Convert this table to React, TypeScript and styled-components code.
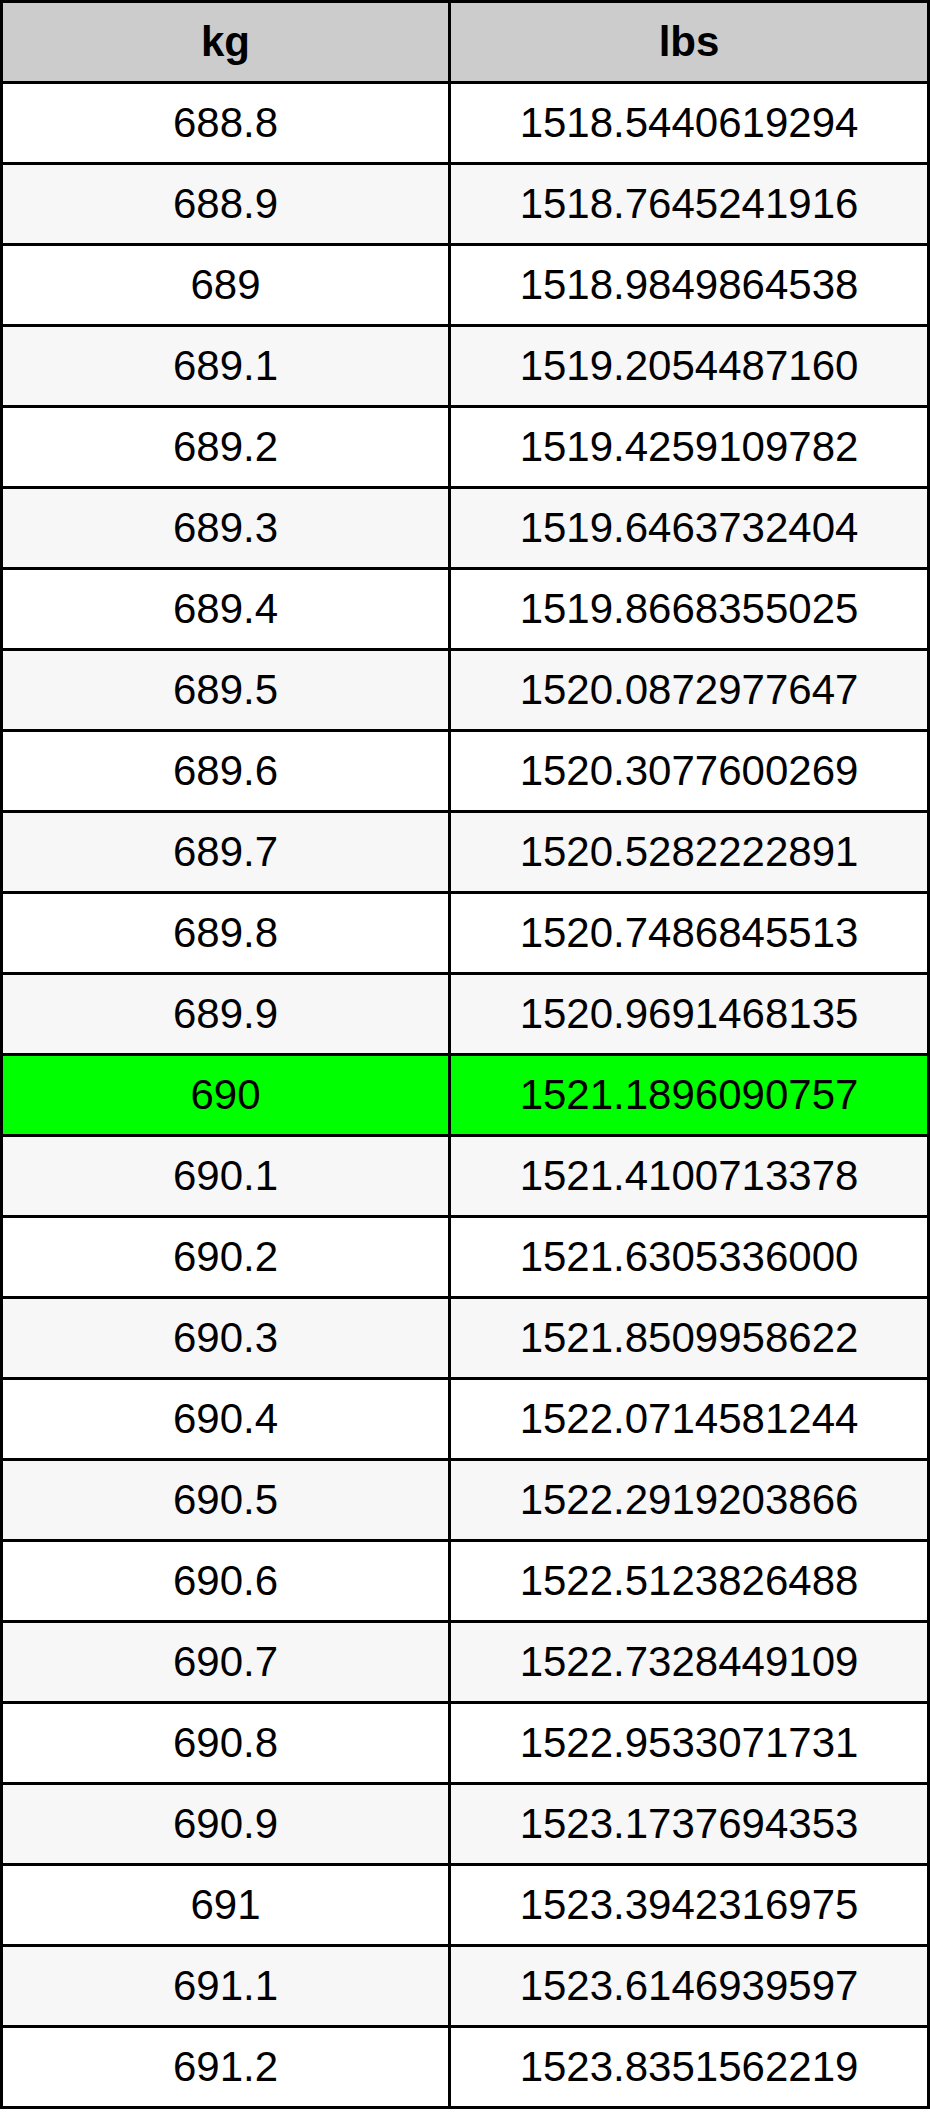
import styled, { createGlobalStyle } from "styled-components";

const rows: [string, string][] = [
  ["688.8", "1518.5440619294"],
  ["688.9", "1518.7645241916"],
  ["689", "1518.9849864538"],
  ["689.1", "1519.2054487160"],
  ["689.2", "1519.4259109782"],
  ["689.3", "1519.6463732404"],
  ["689.4", "1519.8668355025"],
  ["689.5", "1520.0872977647"],
  ["689.6", "1520.3077600269"],
  ["689.7", "1520.5282222891"],
  ["689.8", "1520.7486845513"],
  ["689.9", "1520.9691468135"],
  ["690", "1521.1896090757"],
  ["690.1", "1521.4100713378"],
  ["690.2", "1521.6305336000"],
  ["690.3", "1521.8509958622"],
  ["690.4", "1522.0714581244"],
  ["690.5", "1522.2919203866"],
  ["690.6", "1522.5123826488"],
  ["690.7", "1522.7328449109"],
  ["690.8", "1522.9533071731"],
  ["690.9", "1523.1737694353"],
  ["691", "1523.3942316975"],
  ["691.1", "1523.6146939597"],
  ["691.2", "1523.8351562219"],
];

const HIGHLIGHT = "690";

function App() {
  return (
    <>
      <GlobalStyle />
      <Table>
        <colgroup>
          <col style={{ width: 445 }} />
          <col style={{ width: 476 }} />
        </colgroup>
        <thead>
          <tr>
            <HeadCell>kg</HeadCell>
            <HeadCell>lbs</HeadCell>
          </tr>
        </thead>
        <tbody>
          {rows.map(([kg, lbs], i) => {
            const tone = kg === HIGHLIGHT ? "green" : i % 2 === 1 ? "grey" : "white";
            return (
              <tr key={kg}>
                <Cell $tone={tone}>{kg}</Cell>
                <Cell $tone={tone}>{lbs}</Cell>
              </tr>
            );
          })}
        </tbody>
      </Table>
    </>
  );
}

export default App;

const GlobalStyle = createGlobalStyle`
  body {
    margin: 0;
    background: #ffffff;
    font-family: "Liberation Sans", Arial, sans-serif;
  }
`;

const Table = styled.table`
  width: 930px;
  table-layout: fixed;
  border-collapse: separate;
  border-spacing: 3px;
  background: #000000;
  font-family: "Liberation Sans", Arial, sans-serif;
  font-size: 42px;
  color: #000000;
`;

const HeadCell = styled.th`
  height: 78px;
  padding: 0;
  background: #cccccc;
  font-weight: 700;
  text-align: center;
  vertical-align: middle;
`;

const toneColors = {
  white: "#ffffff",
  grey: "#f7f7f7",
  green: "#00ff00",
};

const Cell = styled.td<{ $tone: keyof typeof toneColors }>`
  height: 78px;
  padding: 0;
  background: ${(p) => toneColors[p.$tone]};
  text-align: center;
  vertical-align: middle;
`;
